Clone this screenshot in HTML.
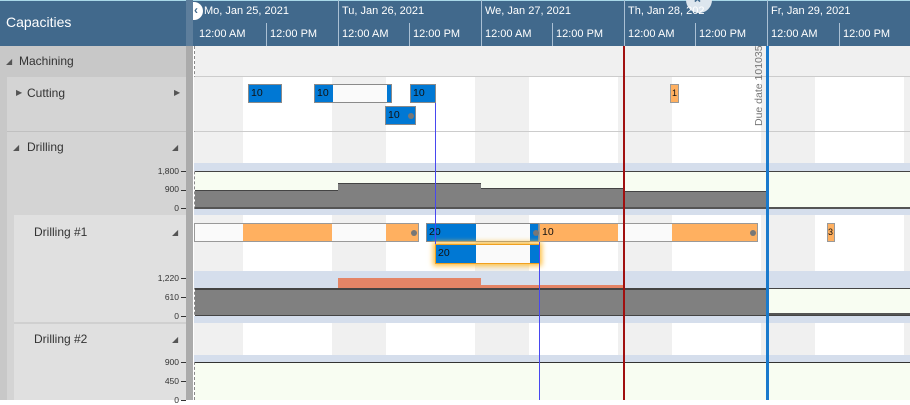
<!DOCTYPE html>
<html><head><meta charset="utf-8"><style>
*{margin:0;padding:0;box-sizing:border-box}
body{width:910px;height:400px;overflow:hidden;position:relative;font-family:"Liberation Sans",sans-serif;background:#fff}
div{position:absolute}
.t{font-size:11px;color:#fff;white-space:nowrap}
.l{font-size:12px;color:#333;white-space:nowrap}
.tri{font-size:8px;color:#555}
.ax{font-size:8.5px;color:#333;text-align:right;width:60px;white-space:nowrap}
.tk{width:5px;height:1px;background:#333}
.st{left:194px;width:716px;background:repeating-linear-gradient(90deg,#f0f0f0 0,#f0f0f0 54px,#fff 54px,#fff 143px);background-position:-5px 0}
.band{left:194px;width:716px;background:#d5deec}
.b{background:#0078d4;border:1px solid #8a8a8a;font-size:10.5px;color:#111;padding-left:2px;line-height:16px}
.o{background:#ffb060;border:1px solid #999;font-size:10.5px;color:#111;line-height:16px}
.dot{width:6px;height:6px;border-radius:3px;background:#777}
.vs{width:1px;background:#aac0d4}
</style></head><body>
<!-- header -->
<div style="left:0;top:0;width:910px;height:46px;background:#41698c"></div>
<div style="left:0;top:0;width:910px;height:1px;background:#a8d8e8"></div>
<div class="t" style="left:6px;top:14px;font-size:14px">Capacities</div>
<div style="left:186px;top:0;width:7px;height:46px;background:#5d7e9c"></div>
<div style="left:193px;top:2px;width:10px;height:18px;background:#fff;border-radius:0 9px 9px 0"></div>
<div style="left:194px;top:3px;font-size:12px;color:#41698c;font-weight:bold">&#8249;</div>
<div style="left:686px;top:-13px;width:26px;height:26px;border-radius:13px;background:#dde6ee"></div>
<div style="left:692px;top:-4px;font-size:13px;color:#41698c;font-weight:bold">&#8963;</div>
<div class="t" style="left:204px;top:5px">Mo, Jan 25, 2021</div>
<div class="t" style="left:342px;top:5px">Tu, Jan 26, 2021</div>
<div class="t" style="left:485px;top:5px">We, Jan 27, 2021</div>
<div class="t" style="left:628px;top:5px">Th, Jan 28, 202</div>
<div class="t" style="left:771px;top:5px">Fr, Jan 29, 2021</div>
<div class="vs" style="left:338px;top:0;height:46px"></div>
<div class="vs" style="left:481px;top:0;height:46px"></div>
<div class="vs" style="left:624px;top:0;height:46px"></div>
<div class="vs" style="left:767px;top:0;height:46px"></div>
<div class="vs" style="left:266px;top:23px;height:23px"></div>
<div class="vs" style="left:409px;top:23px;height:23px"></div>
<div class="vs" style="left:552px;top:23px;height:23px"></div>
<div class="vs" style="left:695px;top:23px;height:23px"></div>
<div class="vs" style="left:839px;top:23px;height:23px"></div>
<div class="t" style="left:199px;top:28px">12:00 AM</div><div class="t" style="left:270px;top:28px">12:00 PM</div>
<div class="t" style="left:342px;top:28px">12:00 AM</div><div class="t" style="left:413px;top:28px">12:00 PM</div>
<div class="t" style="left:485px;top:28px">12:00 AM</div><div class="t" style="left:556px;top:28px">12:00 PM</div>
<div class="t" style="left:628px;top:28px">12:00 AM</div><div class="t" style="left:699px;top:28px">12:00 PM</div>
<div class="t" style="left:771px;top:28px">12:00 AM</div><div class="t" style="left:843px;top:28px">12:00 PM</div>

<!-- left panel -->
<div style="left:0;top:46px;width:186px;height:354px;background:#c8c8c8"></div>
<div style="left:7px;top:77px;width:179px;height:323px;background:#d4d4d4"></div>
<div style="left:7px;top:131px;width:179px;height:1px;background:#c0c0c0"></div>
<div style="left:14px;top:215px;width:172px;height:185px;background:#e0e0e0"></div>
<div style="left:14px;top:322px;width:172px;height:2px;background:#d0d0d0"></div>
<div style="left:186px;top:46px;width:7px;height:354px;background:#ababab"></div>
<div style="left:194px;top:46px;width:0;height:354px;border-left:1px dashed #888"></div>
<div class="tri" style="left:6px;top:57px">&#9698;</div><div class="l" style="left:19px;top:54px">Machining</div>
<div class="tri" style="left:16px;top:88px">&#9654;</div><div class="l" style="left:27px;top:86px">Cutting</div>
<div class="tri" style="left:174px;top:88px">&#9654;</div>
<div class="tri" style="left:13px;top:143px">&#9698;</div><div class="l" style="left:27px;top:140px">Drilling</div>
<div class="tri" style="left:172px;top:143px">&#9698;</div>
<div class="l" style="left:34px;top:225px">Drilling #1</div>
<div class="tri" style="left:172px;top:228px">&#9698;</div>
<div class="l" style="left:34px;top:332px">Drilling #2</div>
<div class="tri" style="left:172px;top:335px">&#9698;</div>
<div class="ax" style="left:119px;top:166px">1,800</div><div class="tk" style="left:181px;top:171px"></div>
<div class="ax" style="left:119px;top:184px">900</div><div class="tk" style="left:181px;top:190px"></div>
<div class="ax" style="left:119px;top:203px">0</div><div class="tk" style="left:181px;top:208px"></div>
<div class="ax" style="left:119px;top:273px">1,220</div><div class="tk" style="left:181px;top:278px"></div>
<div class="ax" style="left:119px;top:292px">610</div><div class="tk" style="left:181px;top:297px"></div>
<div class="ax" style="left:119px;top:311px">0</div><div class="tk" style="left:181px;top:316px"></div>
<div class="ax" style="left:119px;top:357px">900</div><div class="tk" style="left:181px;top:362px"></div>
<div class="ax" style="left:119px;top:376px">450</div><div class="tk" style="left:181px;top:381px"></div>
<div class="ax" style="left:119px;top:395px">0</div><div class="tk" style="left:181px;top:400px"></div>

<!-- chart rows -->
<div style="left:195px;top:46px;width:715px;height:31px;background:#f0f0f0"></div>
<div style="left:195px;top:76px;width:715px;height:1px;background:#ccc"></div>
<div class="st" style="top:77px;height:54px"></div>
<div style="left:195px;top:131px;width:715px;height:1px;background:#ccc"></div>
<div class="st" style="top:132px;height:31px"></div>
<div class="band" style="top:163px;height:8px"></div>
<div style="left:195px;top:171px;width:715px;height:37px;background:#f8fdf2;border-top:1px solid #444"></div>
<div style="left:195px;top:190px;width:143px;height:18px;background:#808080;border-top:1px solid #444"></div>
<div style="left:338px;top:183px;width:143px;height:25px;background:#808080;border-top:1px solid #444"></div>
<div style="left:481px;top:188px;width:143px;height:20px;background:#808080;border-top:1px solid #444"></div>
<div style="left:624px;top:191px;width:143px;height:17px;background:#808080;border-top:1px solid #444"></div>
<div style="left:195px;top:207px;width:715px;height:2px;background:#555"></div>
<div class="band" style="top:209px;height:6px"></div>
<div class="st" style="top:215px;height:56px"></div>
<div class="band" style="top:271px;height:17px"></div>
<div style="left:338px;top:278px;width:143px;height:10px;background:#e48466"></div>
<div style="left:481px;top:285px;width:143px;height:3px;background:#e48466"></div>
<div style="left:195px;top:288px;width:715px;height:27px;background:#f8fdf2;border-top:1px solid #444"></div>
<div style="left:195px;top:288px;width:572px;height:27px;background:#808080;border-top:2px solid #444"></div>
<div style="left:767px;top:313px;width:143px;height:2px;background:#555"></div>
<div style="left:195px;top:315px;width:715px;height:1px;background:#444"></div>
<div class="band" style="top:316px;height:7px"></div>
<div class="st" style="top:323px;height:32px"></div>
<div class="band" style="top:355px;height:7px"></div>
<div style="left:195px;top:362px;width:715px;height:38px;background:#f8fdf2;border-top:1px solid #333"></div>

<!-- tasks cutting -->
<div class="b" style="left:248px;top:84px;width:34px;height:19px">10</div>
<div class="b" style="left:314px;top:84px;width:78px;height:19px;background:linear-gradient(90deg,#0078d4 0 18px,#fafafa 18px 72px,#0078d4 72px)">10</div>
<div class="b" style="left:410px;top:84px;width:26px;height:19px">10</div>
<div class="b" style="left:385px;top:106px;width:31px;height:19px">10</div>
<div class="dot" style="left:408px;top:113px"></div>
<div class="o" style="left:670px;top:84px;width:9px;height:19px;font-size:9px;padding-left:1px">1</div>
<div style="left:749px;top:46px;width:20px;height:84px;"><div style="position:absolute;left:-30px;top:34px;width:80px;transform:rotate(-90deg);font-size:10.5px;color:#777;white-space:nowrap;text-align:center">Due date 101035</div></div>

<!-- drilling #1 tasks -->
<div style="left:194px;top:223px;width:225px;height:19px;background:#fafafa;border:1px solid #999"></div>
<div style="left:243px;top:224px;width:89px;height:17px;background:#ffb060"></div>
<div style="left:386px;top:224px;width:32px;height:17px;background:#ffb060"></div>
<div class="dot" style="left:411px;top:230px"></div>
<div class="b" style="left:426px;top:223px;width:113px;height:19px;background:linear-gradient(90deg,#0078d4 0 49px,#fafafa 49px 103px,#0078d4 103px)">20</div>
<div class="dot" style="left:533px;top:230px"></div>
<div class="o" style="left:539px;top:223px;width:219px;height:19px;padding-left:2px;background:linear-gradient(90deg,#ffb060 0 78px,#fafafa 78px 132px,#ffb060 132px)">10</div>
<div class="dot" style="left:750px;top:230px"></div>
<div class="o" style="left:827px;top:223px;width:8px;height:19px;font-size:9px">3</div>
<div class="b" style="left:435px;top:244px;width:105px;height:20px;background:linear-gradient(90deg,#0078d4 0 40px,#fafafa 40px 94px,#0078d4 94px);border:1px solid #f0a020;box-shadow:0 0 5px 2px #ffc040">20</div>

<!-- lines -->
<div style="left:435px;top:103px;width:1px;height:141px;background:#4848f0"></div>
<div style="left:539px;top:242px;width:1px;height:158px;background:#4848f0"></div>
<div style="left:623px;top:46px;width:2px;height:354px;background:#a01010"></div>
<div style="left:766px;top:46px;width:3px;height:354px;background:#1a7acc"></div>
</body></html>
